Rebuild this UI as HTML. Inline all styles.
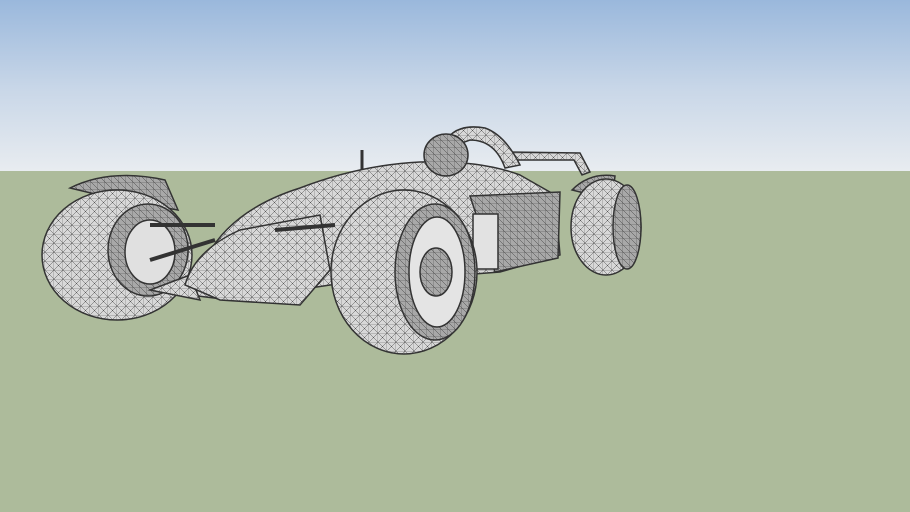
<!DOCTYPE html>
<html><head><style>
html,body{margin:0;padding:0;width:910px;height:512px;overflow:hidden}
body{background:linear-gradient(#9ab8dc 0px,#c9d7e8 90px,#e8ecf0 171px,#adbb9b 171px,#adbb9b 512px)}
svg{position:absolute;left:0;top:0}
</style></head><body>
<svg width="910" height="512" viewBox="0 0 910 512">
<defs>
<pattern id="m" width="9" height="9" patternUnits="userSpaceOnUse">
<rect width="9" height="9" fill="#d8d8d8"/>
<path d="M0 0L9 9M0 9L9 0M0 0H9V9" stroke="#555" stroke-width="0.5" fill="none"/>
</pattern>
<pattern id="d" width="7" height="7" patternUnits="userSpaceOnUse">
<rect width="7" height="7" fill="#a8a8a8"/>
<path d="M0 0L7 7M0 0H7V7" stroke="#444" stroke-width="0.5" fill="none"/>
</pattern>
</defs>
<g stroke="#333" stroke-width="1.5">
<path d="M572 190 Q590 172 615 176 L612 200 Z" fill="url(#d)"/>
<ellipse cx="606" cy="227" rx="35" ry="48" fill="url(#m)"/>
<ellipse cx="627" cy="227" rx="14" ry="42" fill="url(#d)"/>
<path d="M508 152 L580 153 L590 172 L582 175 L574 160 L516 160 Z" fill="url(#m)"/>
<path d="M442 150 Q450 122 485 128 Q505 135 520 165 L505 168 Q495 140 470 140 Z" fill="url(#m)"/>
<path d="M205 260 Q230 210 300 188 Q360 165 420 162 Q480 160 520 175 L555 195 L560 255 L500 272 L330 285 L230 300 L190 295 Z" fill="url(#m)"/>
<path d="M470 196 L560 192 L558 258 L495 272 Z" fill="url(#d)"/>
<rect x="473" y="214" width="25" height="55" fill="#e2e2e2"/>
<ellipse cx="446" cy="155" rx="22" ry="21" fill="url(#d)"/>
<path d="M362 170 V150" stroke-width="3"/>
<path d="M70 188 Q110 168 165 180 L178 210 L120 200 Z" fill="url(#d)"/>
<ellipse cx="117" cy="255" rx="75" ry="65" fill="url(#m)"/>
<ellipse cx="148" cy="250" rx="40" ry="46" fill="url(#d)"/>
<ellipse cx="150" cy="252" rx="25" ry="32" fill="#e0e0e0"/>
<path d="M150 225 L215 225 M150 260 L215 240" stroke-width="4"/>
<path d="M150 290 L200 300 L190 275 Z" fill="url(#m)"/>
<path d="M185 285 Q195 250 240 230 L320 215 L330 270 L300 305 L220 300 Z" fill="url(#m)"/>
<path d="M275 230 L335 225" stroke-width="4"/>
<ellipse cx="404" cy="272" rx="73" ry="82" fill="url(#m)"/>
<ellipse cx="435" cy="272" rx="40" ry="68" fill="url(#d)"/>
<ellipse cx="437" cy="272" rx="28" ry="55" fill="#e4e4e4"/>
<ellipse cx="436" cy="272" rx="16" ry="24" fill="url(#d)"/>
</g>
</svg>
</body></html>
